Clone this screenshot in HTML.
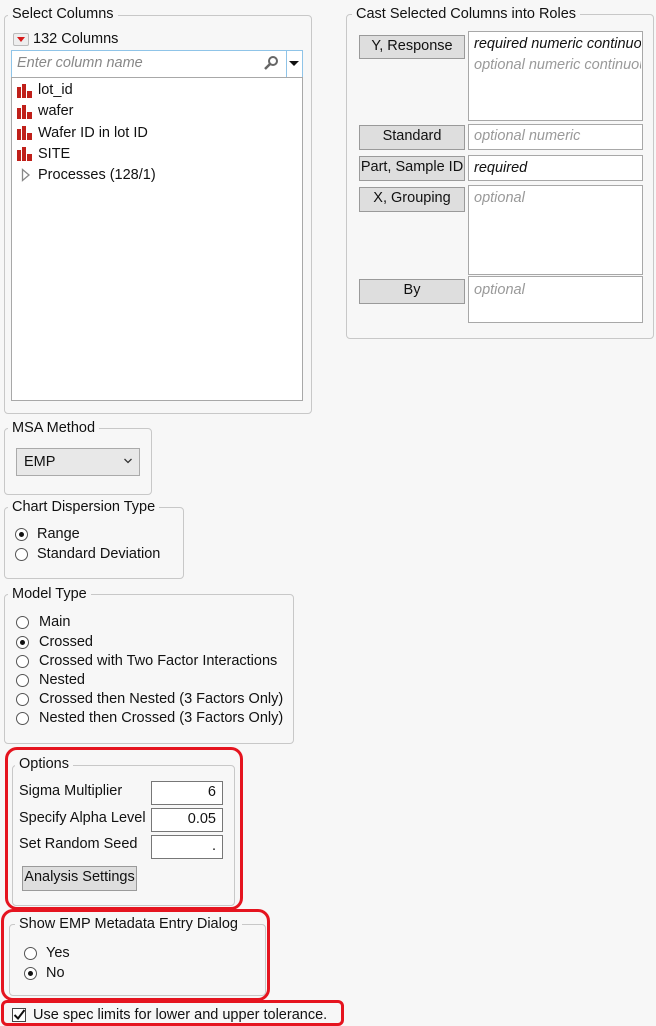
<!DOCTYPE html>
<html><head><meta charset="utf-8"><style>
*{box-sizing:border-box}
body{margin:0;width:656px;height:1026px;background:#f7f7f7;font-family:"Liberation Sans",sans-serif;font-size:14.5px;color:#111;position:relative;overflow:hidden}
.a{position:absolute;white-space:nowrap}
.grp{position:absolute;border:1px solid #c8c8c8;border-radius:4px}
.ttl{position:absolute;background:#f7f7f7;padding:0 4px;line-height:16px}
.btn{position:absolute;background:#dedede;border:1px solid #9a9a9a;text-align:center;line-height:21px}
.box{position:absolute;background:#fff;border:1px solid #a8a8a8}
.it{font-style:italic;color:#999}
.rad{position:absolute;width:13px;height:13px;border:1px solid #555;border-radius:50%;background:#fff}
.rad.on::after{content:"";position:absolute;left:3px;top:3px;width:5px;height:5px;border-radius:50%;background:#111}
.red{position:absolute;border:3px solid #e5141f;border-radius:12px}
.inp{position:absolute;background:#fff;border:1px solid #777;text-align:right;padding-right:6px;line-height:21px}
</style></head><body>

<div class="grp" style="left:4px;top:15px;width:308px;height:399px"></div>
<div class="ttl a" style="left:8px;top:6px">Select Columns</div>
<div class="a" style="left:13px;top:33px;width:16px;height:13px;background:#eee;border:1px solid #bbb;border-radius:2px"><div style="position:absolute;left:3px;top:3px;border-left:4px solid transparent;border-right:4px solid transparent;border-top:5px solid #d81b1b"></div></div>
<div class="a" style="left:33px;top:31px">132 Columns</div>
<div class="box" style="left:11px;top:50px;width:292px;height:28px;border-color:#8fc4e8"></div>
<div class="a it" style="left:17px;top:55px;color:#888">Enter column name</div>
<svg class="a" style="left:263px;top:55px" width="16" height="16"><circle cx="10" cy="6" r="4" fill="none" stroke="#666" stroke-width="2"/><line x1="7" y1="9" x2="2" y2="14" stroke="#666" stroke-width="2.5"/></svg>
<div class="a" style="left:286px;top:51px;width:1px;height:26px;background:#8fc4e8"></div>
<div class="a" style="left:289px;top:61px;border-left:5px solid transparent;border-right:5px solid transparent;border-top:5px solid #111"></div>
<div class="box" style="left:11px;top:77px;width:292px;height:324px"></div>
<svg class="a" style="left:17px;top:84px" width="16" height="14"><rect x="0" y="3" width="4" height="11" fill="#c0201a"/><rect x="5" y="0" width="4" height="14" fill="#c0201a"/><rect x="10" y="7" width="5" height="7" fill="#c0201a"/></svg>
<div class="a" style="left:38px;top:82px">lot_id</div>
<svg class="a" style="left:17px;top:105px" width="16" height="14"><rect x="0" y="3" width="4" height="11" fill="#c0201a"/><rect x="5" y="0" width="4" height="14" fill="#c0201a"/><rect x="10" y="7" width="5" height="7" fill="#c0201a"/></svg>
<div class="a" style="left:38px;top:103px">wafer</div>
<svg class="a" style="left:17px;top:126px" width="16" height="14"><rect x="0" y="3" width="4" height="11" fill="#c0201a"/><rect x="5" y="0" width="4" height="14" fill="#c0201a"/><rect x="10" y="7" width="5" height="7" fill="#c0201a"/></svg>
<div class="a" style="left:38px;top:125px">Wafer ID in lot ID</div>
<svg class="a" style="left:17px;top:147px" width="16" height="14"><rect x="0" y="3" width="4" height="11" fill="#c0201a"/><rect x="5" y="0" width="4" height="14" fill="#c0201a"/><rect x="10" y="7" width="5" height="7" fill="#c0201a"/></svg>
<div class="a" style="left:38px;top:146px">SITE</div>
<svg class="a" style="left:21px;top:168px" width="10" height="14"><path d="M1.5 1.5 L8 7 L1.5 12.5 Z" fill="none" stroke="#888" stroke-width="1.3"/></svg>
<div class="a" style="left:38px;top:167px">Processes (128/1)</div>

<div class="grp" style="left:346px;top:14px;width:308px;height:325px"></div>
<div class="ttl a" style="left:352px;top:6px">Cast Selected Columns into Roles</div>
<div class="btn" style="left:359px;top:35px;width:106px;height:24px">Y, Response</div>
<div class="box" style="left:468px;top:31px;width:175px;height:90px"></div>
<div class="a" style="left:474px;top:36px;font-style:italic;width:167px;overflow:hidden">required numeric continuous</div>
<div class="a it" style="left:474px;top:57px;width:167px;overflow:hidden">optional numeric continuous</div>
<div class="btn" style="left:359px;top:125px;width:106px;height:25px">Standard</div>
<div class="box" style="left:468px;top:124px;width:175px;height:26px"></div>
<div class="a it" style="left:474px;top:128px">optional numeric</div>
<div class="btn" style="left:359px;top:156px;width:106px;height:25px">Part, Sample ID</div>
<div class="box" style="left:468px;top:155px;width:175px;height:26px"></div>
<div class="a" style="left:474px;top:160px;font-style:italic">required</div>
<div class="btn" style="left:359px;top:187px;width:106px;height:25px">X, Grouping</div>
<div class="box" style="left:468px;top:185px;width:175px;height:90px"></div>
<div class="a it" style="left:474px;top:190px">optional</div>
<div class="btn" style="left:359px;top:279px;width:106px;height:25px">By</div>
<div class="box" style="left:468px;top:276px;width:175px;height:47px"></div>
<div class="a it" style="left:474px;top:282px">optional</div>

<div class="grp" style="left:4px;top:428px;width:148px;height:67px"></div>
<div class="ttl a" style="left:8px;top:420px">MSA Method</div>
<div class="a" style="left:16px;top:448px;width:124px;height:28px;background:#e8e8e8;border:1px solid #aaa"></div>
<div class="a" style="left:24px;top:454px">EMP</div>
<svg class="a" style="left:123px;top:457px" width="10" height="8"><path d="M1.5 2 L5 5.5 L8.5 2" fill="none" stroke="#333" stroke-width="1.3"/></svg>

<div class="grp" style="left:4px;top:507px;width:180px;height:72px"></div>
<div class="ttl a" style="left:8px;top:499px">Chart Dispersion Type</div>
<div class="rad on" style="left:15px;top:528px"></div><div class="a" style="left:37px;top:526px">Range</div>
<div class="rad" style="left:15px;top:548px"></div><div class="a" style="left:37px;top:546px">Standard Deviation</div>

<div class="grp" style="left:4px;top:594px;width:290px;height:150px"></div>
<div class="ttl a" style="left:8px;top:586px">Model Type</div>
<div class="rad" style="left:16px;top:616px"></div><div class="a" style="left:39px;top:614px">Main</div>
<div class="rad on" style="left:16px;top:636px"></div><div class="a" style="left:39px;top:634px">Crossed</div>
<div class="rad" style="left:16px;top:655px"></div><div class="a" style="left:39px;top:653px">Crossed with Two Factor Interactions</div>
<div class="rad" style="left:16px;top:674px"></div><div class="a" style="left:39px;top:672px">Nested</div>
<div class="rad" style="left:16px;top:693px"></div><div class="a" style="left:39px;top:691px">Crossed then Nested (3 Factors Only)</div>
<div class="rad" style="left:16px;top:712px"></div><div class="a" style="left:39px;top:710px">Nested then Crossed (3 Factors Only)</div>

<div class="grp" style="left:12px;top:765px;width:223px;height:141px"></div>
<div class="ttl a" style="left:15px;top:756px">Options</div>
<div class="a" style="left:19px;top:783px">Sigma Multiplier</div>
<div class="inp" style="left:151px;top:781px;width:72px;height:24px">6</div>
<div class="a" style="left:19px;top:810px">Specify Alpha Level</div>
<div class="inp" style="left:151px;top:808px;width:72px;height:24px">0.05</div>
<div class="a" style="left:19px;top:836px">Set Random Seed</div>
<div class="inp" style="left:151px;top:835px;width:72px;height:24px">.</div>
<div class="btn" style="left:22px;top:866px;width:115px;height:25px">Analysis Settings</div>
<div class="red" style="left:5px;top:747px;width:238px;height:163px"></div>

<div class="grp" style="left:9px;top:924px;width:257px;height:72px"></div>
<div class="ttl a" style="left:15px;top:916px">Show EMP Metadata Entry Dialog</div>
<div class="rad" style="left:24px;top:947px"></div><div class="a" style="left:46px;top:945px">Yes</div>
<div class="rad on" style="left:24px;top:967px"></div><div class="a" style="left:46px;top:965px">No</div>
<div class="red" style="left:1px;top:909px;width:269px;height:92px"></div>

<div class="a" style="left:12px;top:1008px;width:14px;height:14px;background:#fff;border:1px solid #444"></div>
<svg class="a" style="left:12px;top:1007px" width="15" height="15"><path d="M2.5 8 L6 11.5 L12.5 3" fill="none" stroke="#111" stroke-width="2"/></svg>
<div class="a" style="left:33px;top:1007px">Use spec limits for lower and upper tolerance.</div>
<div class="red" style="left:1px;top:1000px;width:343px;height:26px;border-radius:6px"></div>
</body></html>
